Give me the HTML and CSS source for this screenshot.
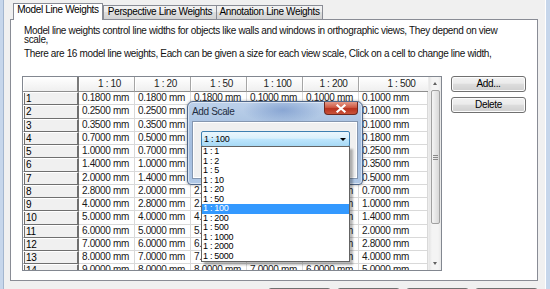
FILE: index.html
```html
<!DOCTYPE html>
<html>
<head>
<meta charset="utf-8">
<link rel="stylesheet" href="styles.css">
</head>
<body>
<div class="window">
  <div class="frame-left"></div>
  <div class="client">
    <div class="tabs">
      <div class="tab active">Model Line Weights</div>
      <div class="tab t2">Perspective Line Weights</div>
      <div class="tab t3">Annotation Line Weights</div>
    </div>
    <div class="panel">
      <p class="desc">Model line weights control line widths for objects like walls and windows in orthographic views, They depend on view<br>scale,</p>
      <p class="desc d2">There are 16 model line weights, Each can be given a size for each view scale, Click on a cell to change line width,</p>
      <div class="grid-area">
        <div class="grid">
          <div class="table">
            <div class="hc corner"></div><div class="hc">1 : 10</div><div class="hc">1 : 20</div><div class="hc">1 : 50</div><div class="hc">1 : 100</div><div class="hc">1 : 200</div><div class="hc last">1 : 500</div>
            <div class="rh">1</div><div class="c">0.1800 mm</div><div class="c">0.1800 mm</div><div class="c">0.1800 mm</div><div class="c">0.1000 mm</div><div class="c">0.1000 mm</div><div class="c">0.1000 mm</div>
            <div class="rh">2</div><div class="c">0.2500 mm</div><div class="c">0.2500 mm</div><div class="c">0.1800 mm</div><div class="c">0.1000 mm</div><div class="c">0.1000 mm</div><div class="c">0.1000 mm</div>
            <div class="rh">3</div><div class="c">0.3500 mm</div><div class="c">0.3500 mm</div><div class="c">0.2500 mm</div><div class="c">0.1800 mm</div><div class="c">0.1000 mm</div><div class="c">0.1000 mm</div>
            <div class="rh">4</div><div class="c">0.7000 mm</div><div class="c">0.5000 mm</div><div class="c">0.3500 mm</div><div class="c">0.2500 mm</div><div class="c">0.1800 mm</div><div class="c">0.1800 mm</div>
            <div class="rh">5</div><div class="c">1.0000 mm</div><div class="c">0.7000 mm</div><div class="c">0.5000 mm</div><div class="c">0.3500 mm</div><div class="c">0.2500 mm</div><div class="c">0.2500 mm</div>
            <div class="rh">6</div><div class="c">1.4000 mm</div><div class="c">1.0000 mm</div><div class="c">0.7000 mm</div><div class="c">0.5000 mm</div><div class="c">0.3500 mm</div><div class="c">0.3500 mm</div>
            <div class="rh">7</div><div class="c">2.0000 mm</div><div class="c">1.4000 mm</div><div class="c">1.0000 mm</div><div class="c">0.7000 mm</div><div class="c">0.5000 mm</div><div class="c">0.5000 mm</div>
            <div class="rh">8</div><div class="c">2.8000 mm</div><div class="c">2.0000 mm</div><div class="c">2.0000 mm</div><div class="c">1.0000 mm</div><div class="c">0.7000 mm</div><div class="c">0.7000 mm</div>
            <div class="rh">9</div><div class="c">4.0000 mm</div><div class="c">2.8000 mm</div><div class="c">2.8000 mm</div><div class="c">1.4000 mm</div><div class="c">1.0000 mm</div><div class="c">1.0000 mm</div>
            <div class="rh">10</div><div class="c">5.0000 mm</div><div class="c">4.0000 mm</div><div class="c">4.0000 mm</div><div class="c">2.0000 mm</div><div class="c">1.4000 mm</div><div class="c">1.4000 mm</div>
            <div class="rh">11</div><div class="c">6.0000 mm</div><div class="c">5.0000 mm</div><div class="c">5.0000 mm</div><div class="c">2.8000 mm</div><div class="c">2.0000 mm</div><div class="c">2.0000 mm</div>
            <div class="rh">12</div><div class="c">7.0000 mm</div><div class="c">6.0000 mm</div><div class="c">6.0000 mm</div><div class="c">4.0000 mm</div><div class="c">2.8000 mm</div><div class="c">2.8000 mm</div>
            <div class="rh">13</div><div class="c">8.0000 mm</div><div class="c">7.0000 mm</div><div class="c">7.0000 mm</div><div class="c">5.0000 mm</div><div class="c">4.0000 mm</div><div class="c">4.0000 mm</div>
            <div class="rh">14</div><div class="c">9.0000 mm</div><div class="c">8.0000 mm</div><div class="c">8.0000 mm</div><div class="c">7.0000 mm</div><div class="c">6.0000 mm</div><div class="c">5.0000 mm</div>
          </div>
          <div class="vscroll">
            <div class="sb-btn"><span class="arr-up"></span></div>
            <div class="sb-thumb"><span class="grip"></span></div>
            <div class="sb-track"></div>
            <div class="sb-btn"><span class="arr-down"></span></div>
          </div>
        </div>
        <div class="side">
          <div class="btn">Add...</div>
          <div class="btn">Delete</div>
        </div>
      </div>
    </div>
    <div class="footer">
      <div class="btn fbtn"></div>
      <div class="btn fbtn"></div>
      <div class="btn fbtn"></div>
      <div class="btn fbtn"></div>
    </div>
  </div>
  <div class="frame-right"></div>

  <div class="dialog">
    <div class="titlebar">
      <span class="title">Add Scale</span>
      <span class="close"><svg width="12" height="9" viewBox="0 0 12 9"><path d="M2.5 1.5 L9.5 7.5 M9.5 1.5 L2.5 7.5" stroke="#fff" stroke-width="2.2" stroke-linecap="square"/></svg></span>
    </div>
    <div class="dlg-client">
      <div class="combo"><span>1 : 100</span><span class="combo-arrow"></span></div>
    </div>
  </div>
  <div class="droplist">
    <div class="item">1 : 1</div>
    <div class="item">1 : 2</div>
    <div class="item">1 : 5</div>
    <div class="item">1 : 10</div>
    <div class="item">1 : 20</div>
    <div class="item">1 : 50</div>
    <div class="item sel">1 : 100</div>
    <div class="item">1 : 200</div>
    <div class="item">1 : 500</div>
    <div class="item">1 : 1000</div>
    <div class="item">1 : 2000</div>
    <div class="item">1 : 5000</div>
  </div>
</div>
</body>
</html>
```
FILE: styles.css
```css
* { box-sizing: border-box; }
html, body { margin: 0; padding: 0; height: 289px; overflow: hidden; }
body {
  background: #f0f0f0;
  font-family: "Liberation Sans", Arial, sans-serif;
  font-size: 10px;
  letter-spacing: -0.35px;
  color: #000;
}
.window { position: relative; display: flex; height: 289px; overflow: hidden; }
.frame-left { width: 4px; flex-shrink: 0; background: #c6d6eb; border-right: 1px solid #a3b6cf; }
.frame-right { width: 5px; flex-shrink: 0; background: #c6d6eb; border-left: 1px solid #ffffff; }
.client { flex: 1; display: flex; flex-direction: column; padding: 3px 7px 0 6px; min-height: 0; }
.client > * { flex-shrink: 0; }

.tabs { display: flex; align-items: flex-end; height: 16px; padding-left: 3px; position: relative; z-index: 1; }
.tab {
  height: 14px;
  border: 1px solid #898c95;
  border-bottom: none;
  background: linear-gradient(#f3f3f3, #ececec 45%, #dedede 50%, #d2d2d2);
  text-align: center;
  line-height: 11px;
  white-space: nowrap;
  color: #000;
}
.tab.active { width: 90px; height: 17px; margin-bottom: -1px; background: #fff; line-height: 12px; }
.tab.t2 { width: 114px; }
.tab.t3 { width: 107px; margin-left: -1px; }

.panel {
  height: 262px;
  border: 1px solid #898c95;
  background: #fff;
  padding: 6px 0 0 11px;
}
.desc { margin: 0 0 0 2px; line-height: 9px; white-space: nowrap; color: #111; }
.desc.d2 { margin-top: 5px; }

.grid-area { display: flex; gap: 9px; margin-top: 18px; align-items: flex-start; }
.grid { width: 420px; height: 195px; border: 1px solid #828790; display: flex; overflow: hidden; flex-shrink: 0; }
.table {
  width: 405px;
  flex-shrink: 0;
  display: grid;
  grid-template-columns: 56px repeat(5, 56px) 69px;
  grid-template-rows: 15px repeat(14, 13.25px);
  align-self: flex-start;
}
.hc {
  background: linear-gradient(#ffffff, #f7f7f7 50%, #efefef);
  border-right: 1px solid #a5a5a5;
  border-bottom: 1px solid #8e8e8e;
  box-shadow: inset 1px 0 0 #ffffff;
  text-align: center;
  padding-left: 6px;
  line-height: 14px;
  color: #1e1e1e;
  white-space: nowrap;
}
.hc.corner { border-right: 2px solid #7a7a7a; }
.hc.last { padding-left: 16px; border-right: none; }
.rh {
  background: #f0f0f0;
  border-top: 1px solid #ffffff;
  border-left: 1px solid #ffffff;
  border-bottom: 1px solid #6f6f6f;
  border-right: 2px solid #6f6f6f;
  box-shadow: inset 1px 0 0 #6f6f6f;
  padding-left: 2px;
  line-height: 11px;
  white-space: nowrap;
  overflow: hidden;
}
.c {
  background: #fff;
  border-right: 1px solid #d9d9d9;
  border-bottom: 1px solid #d9d9d9;
  padding-left: 3px;
  line-height: 12.25px;
  white-space: nowrap;
  overflow: hidden;
  color: #1a1a1a;
}
.vscroll {
  width: 13px;
  flex-shrink: 0;
  display: flex;
  flex-direction: column;
  background: linear-gradient(90deg, #e4e4e4, #f4f4f4 25%, #f4f4f4 75%, #e8e8e8);
  border-left: 1px solid #ececec;
}
.vscroll > * { flex-shrink: 0; }
.sb-btn { height: 13px; display: flex; align-items: center; justify-content: center; }
.arr-up { width: 0; height: 0; border-left: 2px solid transparent; border-right: 2px solid transparent; border-bottom: 3px solid #606060; }
.arr-down { width: 0; height: 0; border-left: 2px solid transparent; border-right: 2px solid transparent; border-top: 3px solid #606060; }
.sb-thumb {
  height: 134px;
  margin: 0 1px 0 2px;
  border: 1px solid #a0a0a0;
  border-radius: 2px;
  background: linear-gradient(90deg, #f5f5f5, #e6e6e6 50%, #d8d8d8);
  display: flex;
  align-items: center;
  justify-content: center;
}
.grip { width: 5px; height: 5px; border-top: 1px solid #8a8a8a; border-bottom: 1px solid #8a8a8a; }
.grip::after { content: ""; display: block; height: 1px; margin-top: 1px; background: #8a8a8a; }
.sb-track { flex: 1 1 auto !important; }

.side { display: flex; flex-direction: column; gap: 5px; }
.btn {
  width: 75px;
  height: 16px;
  border: 1px solid #707070;
  border-radius: 3px;
  background: linear-gradient(#f2f2f2, #ebebeb 45%, #dddddd 50%, #cfcfcf);
  box-shadow: inset 0 0 0 1px #fcfcfc;
  text-align: center;
  line-height: 14px;
  color: #000;
}
.footer { display: flex; justify-content: flex-end; gap: 6px; margin-top: 7px; }
.fbtn { width: 63px; height: 23px; flex-shrink: 0; }

.dialog {
  position: absolute;
  left: 187px;
  top: 101px;
  width: 176px;
  height: 84px;
  border: 1px solid #4f6688;
  border-radius: 6px 6px 4px 4px;
  background:
    radial-gradient(ellipse 40px 14px at 95px 8px, rgba(100,135,195,0.55), rgba(100,135,195,0) 100%),
    linear-gradient(#bdd1ea, #a9c2e1 30%, #a3bddf 60%, #b0c8e6);
  box-shadow: 0 0 3px rgba(0,0,0,0.35), inset 0 0 0 1px rgba(255,255,255,0.5);
  display: flex;
  flex-direction: column;
  padding: 0 4px 5px 4px;
  z-index: 5;
}
.titlebar { height: 19px; flex-shrink: 0; display: flex; justify-content: space-between; align-items: flex-start; }
.title { line-height: 19px; color: #1f2d3f; }
.close {
  width: 34px;
  height: 13px;
  flex-shrink: 0;
  border: 1px solid #6e2a20;
  border-top: none;
  border-radius: 0 0 4px 4px;
  background: linear-gradient(#e49a88, #cf5a44 45%, #b8321e 55%, #c9533a);
  display: flex;
  align-items: center;
  justify-content: center;
}
.close svg { display: block; }
.dlg-client {
  flex: 1;
  border: 1px solid #8597b0;
  box-shadow: inset 0 0 0 1px #ffffff;
  background: #f0f0f0;
  padding: 9px 0 0 8px;
}
.combo {
  width: 149px;
  height: 16px;
  border: 1px solid #3c7fb1;
  border-radius: 2px;
  background: linear-gradient(#eaf6fd, #d9f0fc 45%, #bee6fd 50%, #a7d9f5);
  display: flex;
  align-items: center;
  justify-content: space-between;
  padding: 0 3px 0 2px;
  font-size: 9px;
  letter-spacing: -0.3px;
  color: #000;
}
.combo-arrow { width: 0; height: 0; border-left: 3px solid transparent; border-right: 3px solid transparent; border-top: 3px solid #000; margin-top: 1px; }
.droplist {
  position: absolute;
  left: 201px;
  top: 146px;
  width: 149px;
  height: 116px;
  border: 1px solid #646464;
  background: #fff;
  box-shadow: 3px 3px 2px rgba(0,0,0,0.28);
  z-index: 6;
}
.item {
  height: 9.5px;
  line-height: 9.5px;
  font-size: 9px;
  letter-spacing: -0.3px;
  padding-left: 1px;
  color: #000;
  white-space: nowrap;
}
.item.sel { background: #3399ff; color: #fff; }
```
